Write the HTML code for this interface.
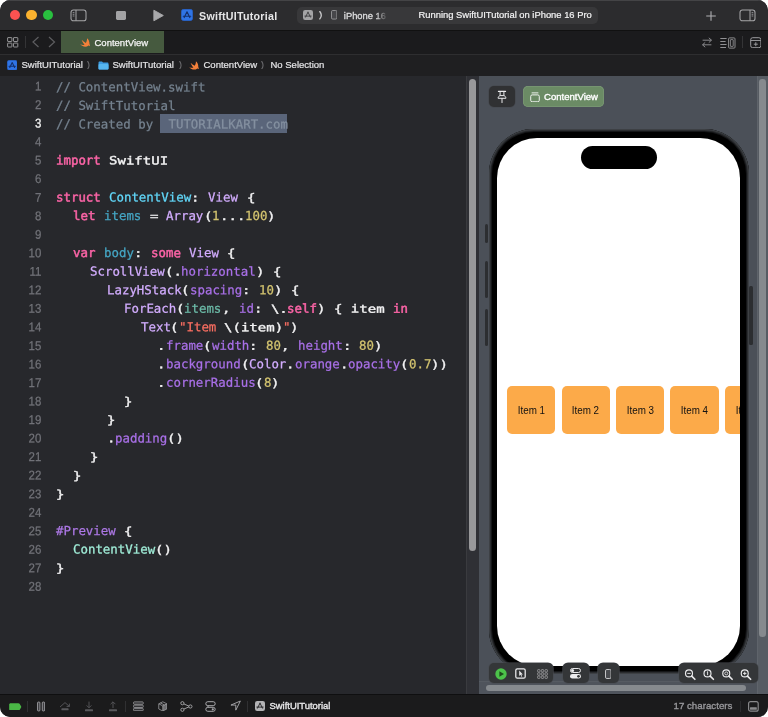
<!DOCTYPE html>
<html lang="en">
<head>
<meta charset="utf-8">
<title>Xcode - ContentView.swift</title>
<style>
*{box-sizing:border-box;margin:0;padding:0}
html,body{width:768px;height:717px;overflow:hidden;background:#fff}
body{font-family:"Liberation Sans",sans-serif;position:relative;-webkit-font-smoothing:antialiased}
#win{position:absolute;left:0;top:0;width:768px;height:717px;border-radius:10.5px;overflow:hidden;background:#27282c;will-change:transform}
.abs{position:absolute}
/* top toolbar */
#toolbar{position:absolute;left:0;top:0;width:768px;height:30.5px;background:#2c2c2e;box-shadow:inset 0 1px 0 #444446}
#tabbar{position:absolute;left:0;top:30px;width:768px;height:24px;background:#1b1b1d;border-top:1px solid #111}
#crumbs{position:absolute;left:0;top:53.6px;width:768px;height:22px;background:#1f1f21;border-top:1px solid #2e2e30}
.dot{position:absolute;top:10.3px;width:10.1px;height:10.1px;border-radius:50%}
#title{position:absolute;left:199px;top:8.6px;font-size:10.7px;font-weight:bold;color:#e6e6e7;letter-spacing:0.25px;line-height:14px;white-space:nowrap}
#pill{position:absolute;left:296.8px;top:6.8px;width:301.4px;height:17.4px;border-radius:5px;background:#38383a}
#pill .t{position:absolute;top:0;line-height:17px;font-size:9.4px;white-space:nowrap;-webkit-text-stroke:0.2px}
#tab{position:absolute;left:61px;top:31.2px;width:103.4px;height:21.6px;background:#465a3f}
#tab .t{position:absolute;left:33.5px;top:0.4px;line-height:22px;font-size:9.5px;color:#f4f4f4;white-space:nowrap;-webkit-text-stroke:0.25px #f4f4f4}
.cr{position:absolute;top:55px;line-height:20px;font-size:9.5px;color:#e4e4e6;white-space:nowrap;-webkit-text-stroke:0.2px #e4e4e6}
.chev{position:absolute;top:55px;line-height:20px;font-size:9px;color:#7d7d80}
/* editor */
#editor{position:absolute;left:0;top:75.5px;width:466px;height:618.5px;background:#27282c}
.ln{position:absolute;left:0;width:41.3px;text-align:right;font-family:"Liberation Sans",sans-serif;font-size:12.6px;line-height:18.5px;color:#717278;height:18.5px;transform:scaleX(0.91) rotate(0.05deg);transform-origin:100% 50%;-webkit-text-stroke:0.25px}
.ln.cur{color:#f2f2f2;-webkit-text-stroke:0.3px #f2f2f2}
.tk{position:absolute;font-family:"DejaVu Sans Mono","Liberation Mono",monospace;font-size:12.41px;line-height:18.5px;height:18.5px;white-space:pre;overflow:visible;-webkit-text-stroke:0.25px;transform:rotate(0.05deg)}
.tk.p{font-size:14.04px;color:#f2f2f3;-webkit-text-stroke:0.45px #f2f2f3;transform-origin:50% 14.14px;transform:rotate(0.05deg) scaleY(0.8)}
.tk.c{color:#75828f}
.tk.k{color:#fb64a6;-webkit-text-stroke:0.5px #fb64a6}
.tk.t{color:#62d9fb}
.tk.d{color:#45a6c4}
.tk.o{color:#d3adff}
.tk.f{color:#a970e8}
.tk.n{color:#d3c36f}
.tk.s{color:#fc6f62}
.tk.v{color:#6cbba8}
.tk.j{color:#a1eed9}
.tk.m{color:#ad78e6}
.tk.sel{color:#8490a0}
.selbg{position:absolute;height:18.5px;background:#5a657a}
#strack{position:absolute;left:466px;top:75.5px;width:13px;height:618.5px;background:#2f3035;border-left:1px solid #3a3b3f}
#sthumb{position:absolute;left:469px;top:79px;width:6.5px;height:472px;border-radius:3.5px;background:#98989a}
/* canvas */
#canvas{position:absolute;left:479px;top:75.6px;width:289px;height:618.4px;background:#4b5058;overflow:hidden}
.item span{display:inline-block;transform:scaleX(0.885);transform-origin:50% 50%}
.item{position:absolute;top:248.4px;width:48.4px;height:48.4px;border-radius:5px;background:#fcaa49;font-size:11.1px;line-height:49.6px;text-align:center;color:#111;white-space:nowrap;overflow:hidden}
.bb{position:absolute;top:663.3px;height:19.8px;border-radius:5px;background:#343638;box-shadow:0 0 0 0.6px #484b50}
#statusbar{position:absolute;left:0;top:693.7px;width:768px;height:23.3px;background:#1b1b1c;border-top:1px solid #0f0f10}
</style>
</head>
<body>
<div id="win">
<div id="toolbar">
  <div class="dot" style="left:10.25px;background:#fc5251"></div>
  <div class="dot" style="left:26.45px;background:#fbb22f"></div>
  <div class="dot" style="left:42.65px;background:#29c03f"></div>
  <svg class="abs" style="left:69.5px;top:8.8px" width="17" height="13" viewBox="0 0 17 13"><rect x="1" y="1" width="15" height="10.8" rx="2.4" fill="none" stroke="#a6a6a8" stroke-width="1.05"/><line x1="6" y1="1" x2="6" y2="11.8" stroke="#a6a6a8" stroke-width="1"/><path d="M2.7 3.6H4.4M2.7 5.3H4.4M2.7 7H4.4" stroke="#a6a6a8" stroke-width="0.8"/></svg>
  <div class="abs" style="left:116.2px;top:10.5px;width:9.6px;height:9.6px;border-radius:1.4px;background:#a3a3a5"></div>
  <svg class="abs" style="left:152.3px;top:8.7px" width="13" height="13" viewBox="0 0 14 14"><path d="M2 1.3 L12.2 7 L2 12.7 Z" fill="#a9a9ab" stroke="#a9a9ab" stroke-width="1" stroke-linejoin="round"/></svg>
  <svg class="abs" style="left:181.3px;top:9.2px" width="12" height="12" viewBox="0 0 12 12"><rect x="0.3" y="0.3" width="11.4" height="11.4" rx="2.4" fill="#2f74e6" stroke="#2562cc" stroke-width="0.6"/><path d="M6 2.8 L3.2 8.6 M6 2.8 L8.8 8.6 M2.3 7.2 H9.7" stroke="#14306c" stroke-width="1.15" fill="none" stroke-linecap="round"/></svg>
  <div id="title">SwiftUITutorial</div>
  <div id="pill">
    <svg class="abs" style="left:6.5px;top:3.5px" width="10" height="10" viewBox="0 0 12 12"><rect width="12" height="12" rx="2.6" fill="#a4a4a6"/><path d="M6 2.6 L3 8.6 M6 2.6 L9 8.6 M2.2 7.3 H9.8" stroke="#3a3a3c" stroke-width="1.1" fill="none" stroke-linecap="round"/></svg>
    <svg class="abs" style="left:21.8px;top:4.4px" width="4.4" height="8.4" viewBox="0 0 4.4 8.4"><path d="M0.8 0.5 Q3.8 4.2 0.8 7.9" fill="none" stroke="#c6c6c8" stroke-width="1.35" stroke-linecap="round"/></svg>
    <svg class="abs" style="left:33.9px;top:3.6px" width="6.4" height="9.6" viewBox="0 0 6.4 9.6"><rect x="0.5" y="0.5" width="5.4" height="8.6" rx="1.2" fill="#47474a" stroke="#98989b" stroke-width="0.9"/></svg>
    <div class="t" style="left:47px;color:#dededf;width:42.5px;overflow:hidden;-webkit-text-stroke:0.3px #dededf;-webkit-mask-image:linear-gradient(90deg,#000 76%,rgba(0,0,0,0.15) 100%)">iPhone 16 Pro</div>
    <div class="t" style="left:121.8px;top:-0.5px;color:#f3f3f4">Running SwiftUITutorial on iPhone 16 Pro</div>
  </div>
  <svg class="abs" style="left:705px;top:9.6px" width="12" height="12" viewBox="0 0 12 12"><path d="M6 1.2V10.8M1.2 6H10.8" stroke="#b0b0b2" stroke-width="1.1"/></svg>
  <svg class="abs" style="left:739px;top:8.6px" width="17" height="13" viewBox="0 0 17 13"><rect x="1" y="1" width="15" height="10.8" rx="2.4" fill="none" stroke="#a6a6a8" stroke-width="1.05"/><line x1="11" y1="1" x2="11" y2="11.8" stroke="#a6a6a8" stroke-width="1"/><path d="M12.6 3.6H14.3M12.6 5.3H14.3M12.6 7H14.3" stroke="#a6a6a8" stroke-width="0.8"/></svg>
</div>
<div id="tabbar"></div>
<!-- tab bar contents -->
<svg class="abs" style="left:6.8px;top:37px" width="12" height="11" viewBox="0 0 12 11"><g fill="none" stroke="#a0a0a3" stroke-width="0.9"><rect x="0.6" y="0.6" width="4.3" height="3.9" rx="0.4"/><rect x="6.5" y="0.6" width="4.3" height="3.9" rx="0.4"/><rect x="0.6" y="6.1" width="4.3" height="3.9" rx="0.4"/><rect x="6.5" y="6.1" width="4.3" height="3.9" rx="0.4"/></g></svg>
<div class="abs" style="left:25px;top:36px;width:1px;height:12px;background:#343436"></div>
<svg class="abs" style="left:31px;top:36px" width="26" height="12" viewBox="0 0 26 12"><path d="M7.5 1 L2 6 L7.5 11" fill="none" stroke="#5d5d60" stroke-width="1.2"/><path d="M18 1 L23.5 6 L18 11" fill="none" stroke="#5d5d60" stroke-width="1.2"/></svg>
<div id="tab">
  <svg class="abs" style="left:18.7px;top:6.7px" width="10.2" height="9.2" viewBox="0 0 10 9"><path d="M6.9 0.2 C8.7 1.6 9.5 4 9.2 6 C9.8 6.8 10 7.6 9.9 8.1 C9.2 7.3 8.6 7.3 8 7.7 C6.2 9.2 2.4 9 0.2 6 C1.6 6.9 3.3 7.1 4.4 6.5 C3.1 5.3 2.2 3.6 1.6 1.8 C2.8 3.1 4.2 4.1 5.7 4.8 C6.7 3.3 7 1.6 6.9 0.2 Z" fill="#f4803a"/></svg>
  <div class="t">ContentView</div>
</div>
<svg class="abs" style="left:701.3px;top:37.3px" width="12" height="11" viewBox="0 0 12 11"><path d="M1.6 3.2 H10.4 M7.8 0.8 L10.5 3.2 L7.8 5.6 M10.4 7.8 H1.6 M4.2 5.4 L1.5 7.8 L4.2 10.2" fill="none" stroke="#8e8e91" stroke-width="0.95"/></svg>
<svg class="abs" style="left:720px;top:36.6px" width="16" height="12" viewBox="0 0 16 12"><path d="M0.3 1.5H6.6M0.3 4.5H5.6M0.3 7.5H6.6M0.3 10.5H6" stroke="#98989b" stroke-width="0.95"/><rect x="8.6" y="0.9" width="6.4" height="10.2" rx="0.9" fill="none" stroke="#98989b" stroke-width="0.9"/><rect x="10.4" y="2.6" width="2.8" height="6.8" rx="0.4" fill="none" stroke="#98989b" stroke-width="0.8"/></svg>
<div class="abs" style="left:742px;top:36px;width:1px;height:12px;background:#343436"></div>
<svg class="abs" style="left:749.6px;top:36.8px" width="11.6" height="11.4" viewBox="0 0 11.6 11.4"><rect x="0.7" y="0.7" width="10.2" height="10" rx="2" fill="none" stroke="#9c9c9f" stroke-width="1"/><path d="M0.7 3.5H10.9M5.8 5.2V9.2M3.8 7.2H7.8" stroke="#9c9c9f" stroke-width="0.95"/></svg>

<div id="crumbs"></div>
<svg class="abs" style="left:6.9px;top:59.6px" width="10.4" height="10.4" viewBox="0 0 12 12"><rect x="0.3" y="0.3" width="11.4" height="11.4" rx="2.4" fill="#2f74e6" stroke="#2562cc" stroke-width="0.6"/><path d="M6 2.8 L3.2 8.6 M6 2.8 L8.8 8.6 M2.3 7.2 H9.7" stroke="#14306c" stroke-width="1.2" fill="none" stroke-linecap="round"/></svg>
<div class="cr" style="left:21.5px">SwiftUITutorial</div>
<svg class="abs" style="left:87.3px;top:61px" width="4" height="8.4" viewBox="0 0 4 8.4"><path d="M0.7 0.4 Q3.4 4.2 0.7 8" fill="none" stroke="#6c6c6f" stroke-width="1.05" stroke-linecap="round"/></svg>
<svg class="abs" style="left:98px;top:60.5px" width="11" height="9" viewBox="0 0 11 9"><path d="M0.5 1.6 C0.5 0.9 1 0.5 1.6 0.5 H4 L5 1.6 H9.4 C10 1.6 10.5 2 10.5 2.7 V7.4 C10.5 8 10 8.5 9.4 8.5 H1.6 C1 8.5 0.5 8 0.5 7.4 Z" fill="#3d9be0"/><rect x="0.5" y="3" width="10" height="5.5" rx="1" fill="#56b6f0"/></svg>
<div class="cr" style="left:112.5px">SwiftUITutorial</div>
<svg class="abs" style="left:178.5px;top:61px" width="4" height="8.4" viewBox="0 0 4 8.4"><path d="M0.7 0.4 Q3.4 4.2 0.7 8" fill="none" stroke="#6c6c6f" stroke-width="1.05" stroke-linecap="round"/></svg>
<svg class="abs" style="left:189px;top:60.5px" width="10" height="9" viewBox="0 0 10 9"><path d="M6.9 0.2 C8.7 1.6 9.5 4 9.2 6 C9.8 6.8 10 7.6 9.9 8.1 C9.2 7.3 8.6 7.3 8 7.7 C6.2 9.2 2.4 9 0.2 6 C1.6 6.9 3.3 7.1 4.4 6.5 C3.1 5.3 2.2 3.6 1.6 1.8 C2.8 3.1 4.2 4.1 5.7 4.8 C6.7 3.3 7 1.6 6.9 0.2 Z" fill="#f4803a"/></svg>
<div class="cr" style="left:203.5px">ContentView</div>
<svg class="abs" style="left:261px;top:61px" width="4" height="8.4" viewBox="0 0 4 8.4"><path d="M0.7 0.4 Q3.4 4.2 0.7 8" fill="none" stroke="#6c6c6f" stroke-width="1.05" stroke-linecap="round"/></svg>
<div class="cr" style="left:270.5px">No Selection</div>

<div id="editor"></div>
<div class="selbg" style="left:160.08px;top:114.3px;width:126.99px"></div>
<div class="ln" style="top:77px;transform:translateY(0.48px) scaleX(0.91) rotate(0.05deg)">1</div>
<span class="tk c" style="left:56.00px;top:78px;width:149.40px;transform:translateY(0.35px) rotate(0.05deg)">// ContentView.swift</span>
<div class="ln" style="top:96px;transform:translateY(0.01px) scaleX(0.91) rotate(0.05deg)">2</div>
<span class="tk c" style="left:56.00px;top:96px;width:119.52px;transform:translateY(0.88px) rotate(0.05deg)">// SwiftTutorial</span>
<div class="ln cur" style="top:114px;transform:translateY(0.54px) scaleX(0.91) rotate(0.05deg)">3</div>
<span class="tk c" style="left:56.00px;top:115px;width:104.58px;transform:translateY(0.41px) rotate(0.05deg)">// Created by </span>
<span class="tk sel" style="left:160.58px;top:115px;width:126.99px;transform:translateY(0.41px) rotate(0.05deg)"> TUTORIALKART.com</span>
<div class="ln" style="top:133px;transform:translateY(0.07px) scaleX(0.91) rotate(0.05deg)">4</div>
<div class="ln" style="top:151px;transform:translateY(0.60px) scaleX(0.91) rotate(0.05deg)">5</div>
<span class="tk k" style="left:56.00px;top:151px;width:44.82px;transform:translateY(0.47px) rotate(0.05deg)">import</span>
<span class="tk p" style="left:109.27px;top:150px;width:59.15px;transform:translateY(0.36px) rotate(0.05deg) scaleY(0.8)">SwiftUI</span>
<div class="ln" style="top:170px;transform:translateY(0.13px) scaleX(0.91) rotate(0.05deg)">6</div>
<div class="ln" style="top:188px;transform:translateY(0.66px) scaleX(0.91) rotate(0.05deg)">7</div>
<span class="tk k" style="left:56.00px;top:188px;width:44.82px;transform:translateY(0.53px) rotate(0.05deg)">struct</span>
<span class="tk t" style="left:109.27px;top:188px;width:82.17px;transform:translateY(0.53px) rotate(0.05deg)">ContentView</span>
<span class="tk p" style="left:191.44px;top:187px;width:16.90px;transform:translateY(0.42px) rotate(0.05deg) scaleY(0.8)">: </span>
<span class="tk o" style="left:208.34px;top:188px;width:29.88px;transform:translateY(0.53px) rotate(0.05deg)">View</span>
<span class="tk p" style="left:246.67px;top:187px;width:8.45px;transform:translateY(0.42px) rotate(0.05deg) scaleY(0.8)">{</span>
<div class="ln" style="top:207px;transform:translateY(0.19px) scaleX(0.91) rotate(0.05deg)">8</div>
<span class="tk k" style="left:72.90px;top:207px;width:22.41px;transform:translateY(0.06px) rotate(0.05deg)">let</span>
<span class="tk d" style="left:103.76px;top:207px;width:37.35px;transform:translateY(0.06px) rotate(0.05deg)">items</span>
<span class="tk p" style="left:149.56px;top:205px;width:16.90px;transform:translateY(0.95px) rotate(0.05deg) scaleY(0.8)">= </span>
<span class="tk o" style="left:166.46px;top:207px;width:37.35px;transform:translateY(0.06px) rotate(0.05deg)">Array</span>
<span class="tk p" style="left:203.81px;top:205px;width:8.45px;transform:translateY(0.95px) rotate(0.05deg) scaleY(0.8)">(</span>
<span class="tk n" style="left:212.26px;top:207px;width:7.47px;transform:translateY(0.06px) rotate(0.05deg)">1</span>
<span class="tk p" style="left:219.73px;top:205px;width:25.35px;transform:translateY(0.95px) rotate(0.05deg) scaleY(0.8)">...</span>
<span class="tk n" style="left:245.08px;top:207px;width:22.41px;transform:translateY(0.06px) rotate(0.05deg)">100</span>
<span class="tk p" style="left:267.49px;top:205px;width:8.45px;transform:translateY(0.95px) rotate(0.05deg) scaleY(0.8)">)</span>
<div class="ln" style="top:225px;transform:translateY(0.72px) scaleX(0.91) rotate(0.05deg)">9</div>
<div class="ln" style="top:244px;transform:translateY(0.25px) scaleX(0.91) rotate(0.05deg)">10</div>
<span class="tk k" style="left:72.90px;top:244px;width:22.41px;transform:translateY(0.12px) rotate(0.05deg)">var</span>
<span class="tk d" style="left:103.76px;top:244px;width:29.88px;transform:translateY(0.12px) rotate(0.05deg)">body</span>
<span class="tk p" style="left:133.64px;top:243px;width:16.90px;transform:translateY(0.01px) rotate(0.05deg) scaleY(0.8)">: </span>
<span class="tk k" style="left:150.54px;top:244px;width:29.88px;transform:translateY(0.12px) rotate(0.05deg)">some</span>
<span class="tk o" style="left:188.87px;top:244px;width:29.88px;transform:translateY(0.12px) rotate(0.05deg)">View</span>
<span class="tk p" style="left:227.20px;top:243px;width:8.45px;transform:translateY(0.01px) rotate(0.05deg) scaleY(0.8)">{</span>
<div class="ln" style="top:262px;transform:translateY(0.78px) scaleX(0.91) rotate(0.05deg)">11</div>
<span class="tk o" style="left:89.80px;top:262px;width:74.70px;transform:translateY(0.65px) rotate(0.05deg)">ScrollView</span>
<span class="tk p" style="left:164.50px;top:261px;width:16.90px;transform:translateY(0.54px) rotate(0.05deg) scaleY(0.8)">(.</span>
<span class="tk f" style="left:181.40px;top:262px;width:74.70px;transform:translateY(0.65px) rotate(0.05deg)">horizontal</span>
<span class="tk p" style="left:256.10px;top:261px;width:25.35px;transform:translateY(0.54px) rotate(0.05deg) scaleY(0.8)">) {</span>
<div class="ln" style="top:281px;transform:translateY(0.31px) scaleX(0.91) rotate(0.05deg)">12</div>
<span class="tk o" style="left:106.70px;top:281px;width:74.70px;transform:translateY(0.18px) rotate(0.05deg)">LazyHStack</span>
<span class="tk p" style="left:181.40px;top:280px;width:8.45px;transform:translateY(0.07px) rotate(0.05deg) scaleY(0.8)">(</span>
<span class="tk f" style="left:189.85px;top:281px;width:52.29px;transform:translateY(0.18px) rotate(0.05deg)">spacing</span>
<span class="tk p" style="left:242.14px;top:280px;width:16.90px;transform:translateY(0.07px) rotate(0.05deg) scaleY(0.8)">: </span>
<span class="tk n" style="left:259.04px;top:281px;width:14.94px;transform:translateY(0.18px) rotate(0.05deg)">10</span>
<span class="tk p" style="left:273.98px;top:280px;width:25.35px;transform:translateY(0.07px) rotate(0.05deg) scaleY(0.8)">) {</span>
<div class="ln" style="top:299px;transform:translateY(0.84px) scaleX(0.91) rotate(0.05deg)">13</div>
<span class="tk o" style="left:123.60px;top:299px;width:52.29px;transform:translateY(0.71px) rotate(0.05deg)">ForEach</span>
<span class="tk p" style="left:175.89px;top:298px;width:8.45px;transform:translateY(0.60px) rotate(0.05deg) scaleY(0.8)">(</span>
<span class="tk v" style="left:184.34px;top:299px;width:37.35px;transform:translateY(0.71px) rotate(0.05deg)">items</span>
<span class="tk p" style="left:221.69px;top:298px;width:16.90px;transform:translateY(0.60px) rotate(0.05deg) scaleY(0.8)">, </span>
<span class="tk f" style="left:238.59px;top:299px;width:14.94px;transform:translateY(0.71px) rotate(0.05deg)">id</span>
<span class="tk p" style="left:253.53px;top:298px;width:33.80px;transform:translateY(0.60px) rotate(0.05deg) scaleY(0.8)">: \.</span>
<span class="tk k" style="left:287.33px;top:299px;width:29.88px;transform:translateY(0.71px) rotate(0.05deg)">self</span>
<span class="tk p" style="left:317.21px;top:298px;width:76.05px;transform:translateY(0.60px) rotate(0.05deg) scaleY(0.8)">) { item </span>
<span class="tk k" style="left:393.26px;top:299px;width:14.94px;transform:translateY(0.71px) rotate(0.05deg)">in</span>
<div class="ln" style="top:318px;transform:translateY(0.37px) scaleX(0.91) rotate(0.05deg)">14</div>
<span class="tk o" style="left:140.50px;top:318px;width:29.88px;transform:translateY(0.24px) rotate(0.05deg)">Text</span>
<span class="tk p" style="left:170.38px;top:317px;width:8.45px;transform:translateY(0.13px) rotate(0.05deg) scaleY(0.8)">(</span>
<span class="tk s" style="left:178.83px;top:318px;width:44.82px;transform:translateY(0.24px) rotate(0.05deg)">&quot;Item </span>
<span class="tk p" style="left:223.65px;top:317px;width:59.15px;transform:translateY(0.13px) rotate(0.05deg) scaleY(0.8)">\(item)</span>
<span class="tk s" style="left:282.80px;top:318px;width:7.47px;transform:translateY(0.24px) rotate(0.05deg)">&quot;</span>
<span class="tk p" style="left:290.27px;top:317px;width:8.45px;transform:translateY(0.13px) rotate(0.05deg) scaleY(0.8)">)</span>
<div class="ln" style="top:336px;transform:translateY(0.90px) scaleX(0.91) rotate(0.05deg)">15</div>
<span class="tk p" style="left:157.40px;top:335px;width:8.45px;transform:translateY(0.66px) rotate(0.05deg) scaleY(0.8)">.</span>
<span class="tk f" style="left:165.85px;top:336px;width:37.35px;transform:translateY(0.77px) rotate(0.05deg)">frame</span>
<span class="tk p" style="left:203.20px;top:335px;width:8.45px;transform:translateY(0.66px) rotate(0.05deg) scaleY(0.8)">(</span>
<span class="tk f" style="left:211.65px;top:336px;width:37.35px;transform:translateY(0.77px) rotate(0.05deg)">width</span>
<span class="tk p" style="left:249.00px;top:335px;width:16.90px;transform:translateY(0.66px) rotate(0.05deg) scaleY(0.8)">: </span>
<span class="tk n" style="left:265.90px;top:336px;width:14.94px;transform:translateY(0.77px) rotate(0.05deg)">80</span>
<span class="tk p" style="left:280.84px;top:335px;width:16.90px;transform:translateY(0.66px) rotate(0.05deg) scaleY(0.8)">, </span>
<span class="tk f" style="left:297.74px;top:336px;width:44.82px;transform:translateY(0.77px) rotate(0.05deg)">height</span>
<span class="tk p" style="left:342.56px;top:335px;width:16.90px;transform:translateY(0.66px) rotate(0.05deg) scaleY(0.8)">: </span>
<span class="tk n" style="left:359.46px;top:336px;width:14.94px;transform:translateY(0.77px) rotate(0.05deg)">80</span>
<span class="tk p" style="left:374.40px;top:335px;width:8.45px;transform:translateY(0.66px) rotate(0.05deg) scaleY(0.8)">)</span>
<div class="ln" style="top:355px;transform:translateY(0.43px) scaleX(0.91) rotate(0.05deg)">16</div>
<span class="tk p" style="left:157.40px;top:354px;width:8.45px;transform:translateY(0.19px) rotate(0.05deg) scaleY(0.8)">.</span>
<span class="tk f" style="left:165.85px;top:355px;width:74.70px;transform:translateY(0.30px) rotate(0.05deg)">background</span>
<span class="tk p" style="left:240.55px;top:354px;width:8.45px;transform:translateY(0.19px) rotate(0.05deg) scaleY(0.8)">(</span>
<span class="tk o" style="left:249.00px;top:355px;width:37.35px;transform:translateY(0.30px) rotate(0.05deg)">Color</span>
<span class="tk p" style="left:286.35px;top:354px;width:8.45px;transform:translateY(0.19px) rotate(0.05deg) scaleY(0.8)">.</span>
<span class="tk f" style="left:294.80px;top:355px;width:44.82px;transform:translateY(0.30px) rotate(0.05deg)">orange</span>
<span class="tk p" style="left:339.62px;top:354px;width:8.45px;transform:translateY(0.19px) rotate(0.05deg) scaleY(0.8)">.</span>
<span class="tk f" style="left:348.07px;top:355px;width:52.29px;transform:translateY(0.30px) rotate(0.05deg)">opacity</span>
<span class="tk p" style="left:400.36px;top:354px;width:8.45px;transform:translateY(0.19px) rotate(0.05deg) scaleY(0.8)">(</span>
<span class="tk n" style="left:408.81px;top:355px;width:22.41px;transform:translateY(0.30px) rotate(0.05deg)">0.7</span>
<span class="tk p" style="left:431.22px;top:354px;width:16.90px;transform:translateY(0.19px) rotate(0.05deg) scaleY(0.8)">))</span>
<div class="ln" style="top:373px;transform:translateY(0.96px) scaleX(0.91) rotate(0.05deg)">17</div>
<span class="tk p" style="left:157.40px;top:372px;width:8.45px;transform:translateY(0.72px) rotate(0.05deg) scaleY(0.8)">.</span>
<span class="tk f" style="left:165.85px;top:373px;width:89.64px;transform:translateY(0.83px) rotate(0.05deg)">cornerRadius</span>
<span class="tk p" style="left:255.49px;top:372px;width:8.45px;transform:translateY(0.72px) rotate(0.05deg) scaleY(0.8)">(</span>
<span class="tk n" style="left:263.94px;top:373px;width:7.47px;transform:translateY(0.83px) rotate(0.05deg)">8</span>
<span class="tk p" style="left:271.41px;top:372px;width:8.45px;transform:translateY(0.72px) rotate(0.05deg) scaleY(0.8)">)</span>
<div class="ln" style="top:392px;transform:translateY(0.49px) scaleX(0.91) rotate(0.05deg)">18</div>
<span class="tk p" style="left:123.60px;top:391px;width:8.45px;transform:translateY(0.25px) rotate(0.05deg) scaleY(0.8)">}</span>
<div class="ln" style="top:411px;transform:translateY(0.02px) scaleX(0.91) rotate(0.05deg)">19</div>
<span class="tk p" style="left:106.70px;top:409px;width:8.45px;transform:translateY(0.78px) rotate(0.05deg) scaleY(0.8)">}</span>
<div class="ln" style="top:429px;transform:translateY(0.55px) scaleX(0.91) rotate(0.05deg)">20</div>
<span class="tk p" style="left:106.70px;top:428px;width:8.45px;transform:translateY(0.31px) rotate(0.05deg) scaleY(0.8)">.</span>
<span class="tk f" style="left:115.15px;top:429px;width:52.29px;transform:translateY(0.42px) rotate(0.05deg)">padding</span>
<span class="tk p" style="left:167.44px;top:428px;width:16.90px;transform:translateY(0.31px) rotate(0.05deg) scaleY(0.8)">()</span>
<div class="ln" style="top:448px;transform:translateY(0.08px) scaleX(0.91) rotate(0.05deg)">21</div>
<span class="tk p" style="left:89.80px;top:446px;width:8.45px;transform:translateY(0.84px) rotate(0.05deg) scaleY(0.8)">}</span>
<div class="ln" style="top:466px;transform:translateY(0.61px) scaleX(0.91) rotate(0.05deg)">22</div>
<span class="tk p" style="left:72.90px;top:465px;width:8.45px;transform:translateY(0.37px) rotate(0.05deg) scaleY(0.8)">}</span>
<div class="ln" style="top:485px;transform:translateY(0.14px) scaleX(0.91) rotate(0.05deg)">23</div>
<span class="tk p" style="left:56.00px;top:483px;width:8.45px;transform:translateY(0.90px) rotate(0.05deg) scaleY(0.8)">}</span>
<div class="ln" style="top:503px;transform:translateY(0.67px) scaleX(0.91) rotate(0.05deg)">24</div>
<div class="ln" style="top:522px;transform:translateY(0.20px) scaleX(0.91) rotate(0.05deg)">25</div>
<span class="tk m" style="left:56.00px;top:522px;width:59.76px;transform:translateY(0.07px) rotate(0.05deg)">#Preview</span>
<span class="tk p" style="left:124.21px;top:520px;width:8.45px;transform:translateY(0.96px) rotate(0.05deg) scaleY(0.8)">{</span>
<div class="ln" style="top:540px;transform:translateY(0.73px) scaleX(0.91) rotate(0.05deg)">26</div>
<span class="tk j" style="left:72.90px;top:540px;width:82.17px;transform:translateY(0.60px) rotate(0.05deg)">ContentView</span>
<span class="tk p" style="left:155.07px;top:539px;width:16.90px;transform:translateY(0.49px) rotate(0.05deg) scaleY(0.8)">()</span>
<div class="ln" style="top:559px;transform:translateY(0.26px) scaleX(0.91) rotate(0.05deg)">27</div>
<span class="tk p" style="left:56.00px;top:558px;width:8.45px;transform:translateY(0.02px) rotate(0.05deg) scaleY(0.8)">}</span>
<div class="ln" style="top:577px;transform:translateY(0.79px) scaleX(0.91) rotate(0.05deg)">28</div>
<div id="strack"></div><div id="sthumb"></div>
<div id="canvas"></div>

<!-- canvas contents -->
<div class="abs" style="left:488.7px;top:86.2px;width:26px;height:20.4px;border-radius:5px;background:#303133;box-shadow:0 0 0 0.6px #44474c"></div>
<svg class="abs" style="left:496.5px;top:89.9px" width="10" height="13.4" viewBox="0 0 10 13.4"><path d="M1.5 1.4 H8.5" stroke="#ececee" stroke-width="1.3" stroke-linecap="round" fill="none"/><path d="M3.1 1.6 V5.6 M6.9 1.6 V5.6" stroke="#ececee" stroke-width="1" fill="none"/><path d="M1.1 8.3 C1.1 6.8 2.1 5.9 3.1 5.6 H6.9 C7.9 5.9 8.9 6.8 8.9 8.3 Z" fill="none" stroke="#ececee" stroke-width="1" stroke-linejoin="round"/><path d="M5 8.4 V12.6" stroke="#ececee" stroke-width="1" stroke-linecap="round"/></svg>
<div class="abs" style="left:523px;top:86.2px;width:81.3px;height:20.4px;border-radius:5px;background:#6b8b65;box-shadow:inset 0 0 0 0.7px #7b9975"></div>
<svg class="abs" style="left:529.8px;top:91.6px" width="10" height="10.4" viewBox="0 0 10 10.4"><rect x="0.7" y="2.9" width="8.6" height="6.9" rx="1.5" fill="none" stroke="#f0f3ef" stroke-width="1"/><path d="M2 0.9 H8" stroke="#f0f3ef" stroke-width="1" stroke-linecap="round"/></svg>
<div class="abs" style="left:544px;top:86.5px;line-height:20px;font-size:9.55px;color:#fff;white-space:nowrap;-webkit-text-stroke:0.35px #fff">ContentView</div>

<!-- phone -->
<div class="abs" id="phone" style="left:488.6px;top:128.6px;width:260.4px;height:545.6px;border-radius:45px;background:#000;box-shadow:inset 0 0 0 1px #3d4044, inset 0 0 0 2px #2a2c2f, inset 0 0 0 3px #151618"></div>
<div class="abs" id="screen" style="left:497.2px;top:137.7px;width:243.3px;height:527.9px;border-radius:40px;background:#fff;overflow:hidden">
  <div class="abs" style="left:83.4px;top:8.1px;width:76.6px;height:23px;border-radius:11.5px;background:#000"></div>
  <div class="item" style="left:9.8px"><span>Item 1</span></div>
  <div class="item" style="left:64.5px"><span>Item 2</span></div>
  <div class="item" style="left:118.8px"><span>Item 3</span></div>
  <div class="item" style="left:173.3px"><span>Item 4</span></div>
  <div class="item" style="left:227.8px;text-align:left;padding-left:8.6px"><span>Item 5</span></div>
</div>
<!-- side buttons of phone -->
<div class="abs" style="left:484.8px;top:224.2px;width:3.4px;height:19.3px;border-radius:1.5px;background:#2c2e31"></div>
<div class="abs" style="left:484.8px;top:260.8px;width:3.4px;height:37.1px;border-radius:1.5px;background:#2c2e31"></div>
<div class="abs" style="left:484.8px;top:309.4px;width:3.4px;height:37px;border-radius:1.5px;background:#2c2e31"></div>
<div class="abs" style="left:749.4px;top:286px;width:3.3px;height:59.4px;border-radius:1.5px;background:#2c2e31"></div>
<!-- bottom strip -->
<div class="abs" style="left:479px;top:681px;width:278px;height:13px;background:#4f545c;border-top:1px solid #565b62"></div>
<div class="abs" style="left:485.5px;top:684.5px;width:260.5px;height:6.5px;border-radius:3.3px;background:#868a8e"></div>
<!-- right scrollbar -->
<div class="abs" style="left:756.5px;top:75.6px;width:11.5px;height:618.4px;background:#575c63;border-left:1px solid #5f646b"></div>
<div class="abs" style="left:759.1px;top:79px;width:6.6px;height:558px;border-radius:3.3px;background:#868a8e"></div>
<!-- bottom buttons -->
<div class="bb" style="left:489.1px;width:64.3px"></div>
<div class="bb" style="left:563px;width:25.5px"></div>
<div class="bb" style="left:597.5px;width:21.5px"></div>
<div class="bb" style="left:678.6px;width:79.2px"></div>
<svg class="abs" style="left:495px;top:667.75px" width="12" height="12" viewBox="0 0 12 12"><circle cx="6" cy="6" r="5.7" fill="#4cc24a"/><path d="M4.4 3.2 L9 6 L4.4 8.8 Z" fill="#1e4a1c"/></svg>
<svg class="abs" style="left:515px;top:668.2px" width="11" height="11" viewBox="0 0 11 11"><rect x="0.8" y="0.8" width="9.4" height="9.4" rx="1.5" fill="none" stroke="#ececee" stroke-width="1.25"/><path d="M4.2 2.6 V8 L5.5 6.8 L6.4 8.8 L7.2 8.4 L6.3 6.5 H7.9 Z" fill="#e6e6e8"/></svg>
<svg class="abs" style="left:536.5px;top:668.5px" width="11" height="10" viewBox="0 0 11 10"><g fill="none" stroke="#98989b" stroke-width="0.9"><rect x="0.6" y="0.6" width="2.4" height="2.4" rx="0.6"/><rect x="4.3" y="0.6" width="2.4" height="2.4" rx="0.6"/><rect x="8" y="0.6" width="2.4" height="2.4" rx="0.6"/><rect x="0.6" y="3.8" width="2.4" height="2.4" rx="0.6"/><rect x="4.3" y="3.8" width="2.4" height="2.4" rx="0.6"/><rect x="8" y="3.8" width="2.4" height="2.4" rx="0.6"/><rect x="0.6" y="7" width="2.4" height="2.4" rx="0.6"/><rect x="4.3" y="7" width="2.4" height="2.4" rx="0.6"/><rect x="8" y="7" width="2.4" height="2.4" rx="0.6"/></g></svg>
<svg class="abs" style="left:570.2px;top:668.4px" width="11" height="10.6" viewBox="0 0 11 10.6"><rect x="0.5" y="0.5" width="10" height="4" rx="2" fill="none" stroke="#ececee" stroke-width="1"/><circle cx="2.6" cy="2.5" r="1.5" fill="#ececee"/><rect x="0" y="6" width="11" height="4.6" rx="2.3" fill="#ececee"/><circle cx="8.5" cy="8.3" r="1.35" fill="#333537"/></svg>
<svg class="abs" style="left:604.8px;top:668.6px" width="6.6" height="10" viewBox="0 0 6.6 10"><rect x="0.5" y="0.5" width="5.6" height="9" rx="1.3" fill="#4a4c50" stroke="#d6d6d8" stroke-width="0.9"/></svg>
<svg class="abs" style="left:683.5px;top:667.5px" width="70" height="13" viewBox="0 0 70 13"><g fill="none" stroke="#ececee"><circle cx="5" cy="5.4" r="3.5" stroke-width="1.15"/><path d="M7.70 8.10 L10.90 11.30" stroke-width="1.6" stroke-linecap="round"/><path d="M3.3 5.4 H6.7" stroke-width="0.95"/><circle cx="23.5" cy="5.4" r="3.5" stroke-width="1.15"/><path d="M26.20 8.10 L29.40 11.30" stroke-width="1.6" stroke-linecap="round"/><path d="M23.6 3.7 V7.1 M22.9 4.3 L23.6 3.7" stroke-width="0.9"/><circle cx="42.25" cy="5.4" r="3.5" stroke-width="1.15"/><path d="M44.95 8.10 L48.15 11.30" stroke-width="1.6" stroke-linecap="round"/><circle cx="42.25" cy="5.4" r="1.5" stroke-width="0.8"/><circle cx="60.75" cy="5.4" r="3.5" stroke-width="1.15"/><path d="M63.45 8.10 L66.65 11.30" stroke-width="1.6" stroke-linecap="round"/><path d="M59.05 5.4 H62.45 M60.75 3.7 V7.1" stroke-width="0.95"/></g></svg>

<div id="statusbar"></div>

<!-- status bar contents -->
<svg class="abs" style="left:9.2px;top:702.5px" width="12.4" height="7.8" viewBox="0 0 12.4 7.8"><path d="M1.6 0.2 H9.4 C9.9 0.2 10.3 0.4 10.6 0.8 L12.1 3.3 C12.3 3.7 12.3 4.1 12.1 4.5 L10.6 7 C10.3 7.4 9.9 7.6 9.4 7.6 H1.6 C0.8 7.6 0.2 7 0.2 6.2 V1.6 C0.2 0.8 0.8 0.2 1.6 0.2 Z" fill="#4ab846"/></svg>
<div class="abs" style="left:27px;top:700.5px;width:1px;height:11px;background:#303032"></div>
<svg class="abs" style="left:36.8px;top:700.8px" width="8.2" height="11" viewBox="0 0 9 11"><rect x="0.6" y="0.6" width="2.6" height="9.8" rx="0.9" fill="#3c3c3f" stroke="#b4b4b7" stroke-width="0.85"/><rect x="5.8" y="0.6" width="2.6" height="9.8" rx="0.9" fill="#3c3c3f" stroke="#b4b4b7" stroke-width="0.85"/></svg>
<svg class="abs" style="left:59px;top:701px" width="12" height="10" viewBox="0 0 12 10"><path d="M1 6 L6 1.6 L10.4 5.4 M10.4 5.4 V2.6 M10.4 5.4 H7.6" fill="none" stroke="#59595c" stroke-width="0.9"/><rect x="2.4" y="7.3" width="7.2" height="2" rx="0.6" fill="#59595c"/></svg>
<svg class="abs" style="left:84px;top:700.5px" width="10" height="11" viewBox="0 0 10 11"><path d="M5 0.6 V6.6 M2.6 4.4 L5 6.8 L7.4 4.4" fill="none" stroke="#59595c" stroke-width="0.9"/><rect x="1" y="8.3" width="8" height="2" rx="0.6" fill="#59595c"/></svg>
<svg class="abs" style="left:108px;top:700.5px" width="10" height="11" viewBox="0 0 10 11"><path d="M5 7 V0.9 M2.6 3.2 L5 0.8 L7.4 3.2" fill="none" stroke="#59595c" stroke-width="0.9"/><rect x="1" y="8.3" width="8" height="2" rx="0.6" fill="#59595c"/></svg>
<div class="abs" style="left:125px;top:700.5px;width:1px;height:11px;background:#303032"></div>
<svg class="abs" style="left:132.8px;top:700.9px" width="10.8" height="10.6" viewBox="0 0 12 11"><g fill="#2e2e31" stroke="#a4a4a7" stroke-width="0.85"><rect x="0.6" y="0.6" width="10.8" height="2.6" rx="0.8"/><rect x="0.6" y="4.2" width="10.8" height="2.6" rx="0.8"/><rect x="0.6" y="7.8" width="10.8" height="2.6" rx="0.8"/></g></svg>
<svg class="abs" style="left:157.7px;top:700.7px" width="9.6" height="10.8" viewBox="0 0 10 11"><path d="M5 5 L9.2 2.8 V8.2 L5 10.3 Z" fill="#6e6e71"/><path d="M5 0.7 L9.2 2.8 V8.2 L5 10.3 L0.8 8.2 V2.8 Z M5 5 V10.3 M0.8 2.8 L5 5 L9.2 2.8 M2.6 1.9 L6.9 4.1" fill="none" stroke="#a2a2a5" stroke-width="0.8" stroke-linejoin="round"/></svg>
<svg class="abs" style="left:180px;top:700.5px" width="13" height="11" viewBox="0 0 13 11"><g fill="none" stroke="#a9a9ac" stroke-width="0.9"><circle cx="2.4" cy="2.2" r="1.6"/><circle cx="2.4" cy="8.8" r="1.6"/><circle cx="10.4" cy="5.5" r="1.6"/><path d="M3.8 2.9 L8.9 5.1 M3.8 8.1 L8.9 5.9"/></g></svg>
<svg class="abs" style="left:205px;top:700.5px" width="11" height="11" viewBox="0 0 11 11"><g fill="none" stroke="#a9a9ac" stroke-width="1"><rect x="0.8" y="0.7" width="9.4" height="4" rx="2"/><rect x="0.8" y="6.3" width="9.4" height="4" rx="2"/><path d="M3 4.7 V6.3"/></g><circle cx="7.8" cy="8.3" r="1.1" fill="#a9a9ac"/></svg>
<svg class="abs" style="left:229.6px;top:700.2px" width="11.4" height="11.4" viewBox="0 0 11 11"><path d="M10 1 L0.9 4.9 H5.6 V9.8 Z" fill="none" stroke="#a9a9ac" stroke-width="0.9" stroke-linejoin="round"/></svg>
<div class="abs" style="left:247px;top:700.5px;width:1px;height:11px;background:#303032"></div>
<svg class="abs" style="left:254.5px;top:701px" width="10" height="10" viewBox="0 0 12 12"><rect width="12" height="12" rx="2.6" fill="#b4b4b6"/><path d="M6 2.6 L3 8.6 M6 2.6 L9 8.6 M2.2 7.3 H9.8" stroke="#1e1e20" stroke-width="1.1" fill="none" stroke-linecap="round"/></svg>
<div class="abs" style="left:269.5px;top:695px;line-height:22px;font-size:9.43px;color:#e8e8ea;-webkit-text-stroke:0.35px #e8e8ea;white-space:nowrap">SwiftUITutorial</div>
<div class="abs" style="left:673.5px;top:695px;line-height:22px;font-size:9.72px;color:#97979a;-webkit-text-stroke:0.35px #97979a;white-space:nowrap">17 characters</div>
<div class="abs" style="left:739.6px;top:700.5px;width:1px;height:11px;background:#2c2c2e"></div>
<svg class="abs" style="left:747.9px;top:700.9px" width="10.8" height="10.8" viewBox="0 0 10.8 10.8"><rect x="0.6" y="0.6" width="9.6" height="9.6" rx="2" fill="none" stroke="#8a8a8c" stroke-width="1.15"/><rect x="2" y="6.3" width="6.8" height="2.5" rx="0.5" fill="#8a8a8c"/></svg>

</div>
</body>
</html>
